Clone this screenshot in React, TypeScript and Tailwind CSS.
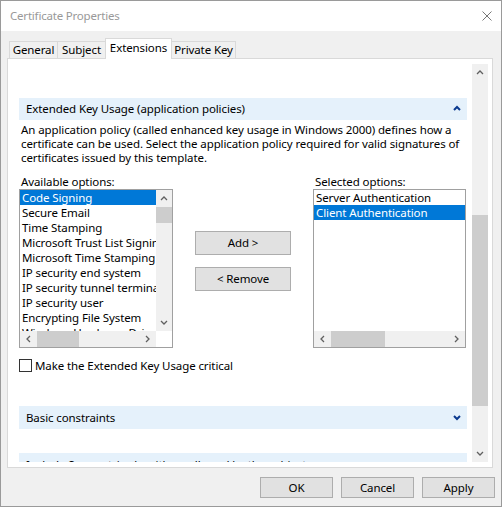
import React from 'react'

const AVAILABLE = [
  'Code Signing',
  'Secure Email',
  'Time Stamping',
  'Microsoft Trust List Signing',
  'Microsoft Time Stamping',
  'IP security end system',
  'IP security tunnel termination',
  'IP security user',
  'Encrypting File System',
  'Windows Hardware Driver Verification',
]

const SELECTED = ['Server Authentication', 'Client Authentication']

function Chevron({ dir, color = '#606060', bold = false }: { dir: 'up' | 'down' | 'left' | 'right'; color?: string; bold?: boolean }) {
  const pts = {
    up: '1,5 4,2 7,5',
    down: '1,2 4,5 7,2',
    left: '5,1 2,4 5,7',
    right: '2,1 5,4 2,7',
  }[dir]
  return (
    <svg width="8" height="8" viewBox="0 0 8 8" className="block">
      <polyline points={pts} fill="none" stroke={color} strokeWidth={bold ? 2 : 1.3} />
    </svg>
  )
}

function HScroll({ thumbLeft, thumbWidth }: { thumbLeft: number; thumbWidth: number }) {
  return (
    <div className="h-[16px] bg-[#f0f0f0] flex relative">
      <div className="w-[17px] h-full flex items-center justify-center">
        <Chevron dir="left" />
      </div>
      <div className="flex-1 relative">
        <div className="absolute top-0 h-full bg-[#cdcdcd]" style={{ left: thumbLeft, width: thumbWidth }} />
      </div>
      <div className="w-[17px] h-full flex items-center justify-center">
        <Chevron dir="right" />
      </div>
    </div>
  )
}

function SectionHeader({ title, open, h, clip = false }: { title: string; open: boolean; h: string; clip?: boolean }) {
  return (
    <div className={`${h} bg-[#e5f1fb] flex items-center justify-between pl-[7px] pr-[6px] shrink-0 ${clip ? 'pt-[1px]' : ''}`}>
      <span className="whitespace-nowrap">{title}</span>
      <Chevron dir={open ? 'up' : 'down'} color="#0b3a8f" bold />
    </div>
  )
}

export default function App() {
  return (
    <div className="w-[502px] h-[507px] border border-[#9a9a9a] bg-[#f0f0f0] flex flex-col text-black font-['Noto_Sans',sans-serif] text-[11.5px] tracking-[-0.1px] overflow-hidden">
      {/* title bar */}
      <div className="h-[30px] bg-white flex items-center justify-between pl-[9px] pr-[9px] shrink-0">
        <span className="text-[#999] text-[11.5px] tracking-[-0.2px]">Certificate Properties</span>
        <svg width="10" height="10" viewBox="0 0 10 10">
          <path d="M0.5 0.5 L9.5 9.5 M9.5 0.5 L0.5 9.5" stroke="#777" strokeWidth="1" />
        </svg>
      </div>

      {/* tabs */}
      <div className="h-[27px] flex items-end pl-[8px] shrink-0">
        <div className="w-[48px] h-[17px] border-l border-t border-[#d9d9d9] flex items-center justify-center">General</div>
        <div className="w-[48px] h-[17px] border-l border-t border-[#d9d9d9] flex items-center justify-center">Subject</div>
        <div className="w-[67px] h-[21px] -mb-px relative z-10 bg-white border-l border-t border-r border-[#d9d9d9] flex items-center justify-center pb-[3px]">Extensions</div>
        <div className="w-[64px] h-[17px] border-t border-r border-[#d9d9d9] flex items-center justify-center">Private Key</div>
      </div>

      {/* tab page */}
      <div className="ml-[6px] w-[486px] h-[410px] bg-white border border-[#d9d9d9] pt-[5px] pr-[4px] shrink-0">
        <div className="h-[398px] flex">
          <div className="flex-1 overflow-hidden pl-[11px] pr-[5px] flex flex-col">
            <div className="h-[34px] shrink-0" />
            <SectionHeader title="Extended Key Usage (application policies)" open h="h-[22px]" />
            <div className="mt-[3px] px-[2px] leading-[14px] whitespace-nowrap shrink-0">
              <div>An application policy (called enhanced key usage in Windows 2000) defines how a</div>
              <div>certificate can be used. Select the application policy required for valid signatures of</div>
              <div>certificates issued by this template.</div>
            </div>

            <div className="mt-[10px] flex shrink-0">
              {/* available */}
              <div className="w-[154px]">
                <div className="h-[14px] leading-[14px] pl-[2px]">Available options:</div>
                <div className="h-[159px] border border-[#a0a0a0] bg-white flex">
                  <div className="flex-1 flex flex-col min-w-0">
                    <div className="flex-1 overflow-hidden">
                      {AVAILABLE.map((o, i) => (
                        <div
                          key={o}
                          className={`h-[15px] leading-[15px] pl-[2px] whitespace-nowrap ${i === 0 ? 'bg-[#0078d7] text-white' : ''}`}
                        >
                          {o}
                        </div>
                      ))}
                    </div>
                    <HScroll thumbLeft={0} thumbWidth={42} />
                  </div>
                  <div className="w-[16px] flex flex-col">
                    <div className="flex-1 bg-[#f0f0f0] flex flex-col">
                      <div className="h-[17px] flex items-center justify-center">
                        <Chevron dir="up" />
                      </div>
                      <div className="h-[16px] bg-[#cdcdcd]" />
                      <div className="flex-1" />
                      <div className="h-[17px] flex items-center justify-center">
                        <Chevron dir="down" />
                      </div>
                    </div>
                    <div className="h-[16px] bg-white" />
                  </div>
                </div>
              </div>

              {/* buttons */}
              <div className="ml-[22px] w-[96px] pt-[56px] flex flex-col gap-[12px]">
                <div className="h-[24px] bg-[#e1e1e1] border border-[#adadad] flex items-center justify-center">Add &gt;</div>
                <div className="h-[24px] bg-[#e1e1e1] border border-[#adadad] flex items-center justify-center">&lt; Remove</div>
              </div>

              {/* selected */}
              <div className="ml-[22px] w-[153px]">
                <div className="h-[14px] leading-[14px] pl-[2px]">Selected options:</div>
                <div className="h-[159px] border border-[#a0a0a0] bg-white flex flex-col">
                  <div className="flex-1 overflow-hidden">
                    {SELECTED.map((o, i) => (
                      <div
                        key={o}
                        className={`h-[15px] leading-[15px] pl-[2px] whitespace-nowrap ${i === 1 ? 'bg-[#0078d7] text-white' : ''}`}
                      >
                        {o}
                      </div>
                    ))}
                  </div>
                  <HScroll thumbLeft={0} thumbWidth={54} />
                </div>
              </div>
            </div>

            <div className="mt-[11px] h-[13px] flex items-center shrink-0">
              <div className="w-[13px] h-[13px] border border-[#333] bg-white" />
              <span className="ml-[3px] whitespace-nowrap">Make the Extended Key Usage critical</span>
            </div>

            <div className="h-[34px] shrink-0" />
            <SectionHeader title="Basic constraints" open={false} h="h-[23px]" />
            <div className="h-[24px] shrink-0" />
            <SectionHeader title="Include Symmetric algorithms allowed by the subject" open={false} h="h-[22px]" clip />
          </div>

          {/* page scrollbar */}
          <div className="w-[16px] bg-[#f0f0f0] flex flex-col">
            <div className="h-[17px] flex items-center justify-center">
              <Chevron dir="up" />
            </div>
            <div className="h-[134px]" />
            <div className="h-[191px] bg-[#cdcdcd]" />
            <div className="flex-1" />
            <div className="h-[17px] flex items-center justify-center">
              <Chevron dir="down" />
            </div>
          </div>
        </div>
      </div>

      {/* dialog buttons */}
      <div className="mt-[9px] flex justify-end gap-[8px] pr-[6px] shrink-0">
        <div className="w-[73px] h-[21px] bg-[#e1e1e1] border border-[#adadad] flex items-center justify-center">OK</div>
        <div className="w-[73px] h-[21px] bg-[#e1e1e1] border border-[#adadad] flex items-center justify-center">Cancel</div>
        <div className="w-[73px] h-[21px] bg-[#e1e1e1] border border-[#adadad] flex items-center justify-center">Apply</div>
      </div>
    </div>
  )
}
